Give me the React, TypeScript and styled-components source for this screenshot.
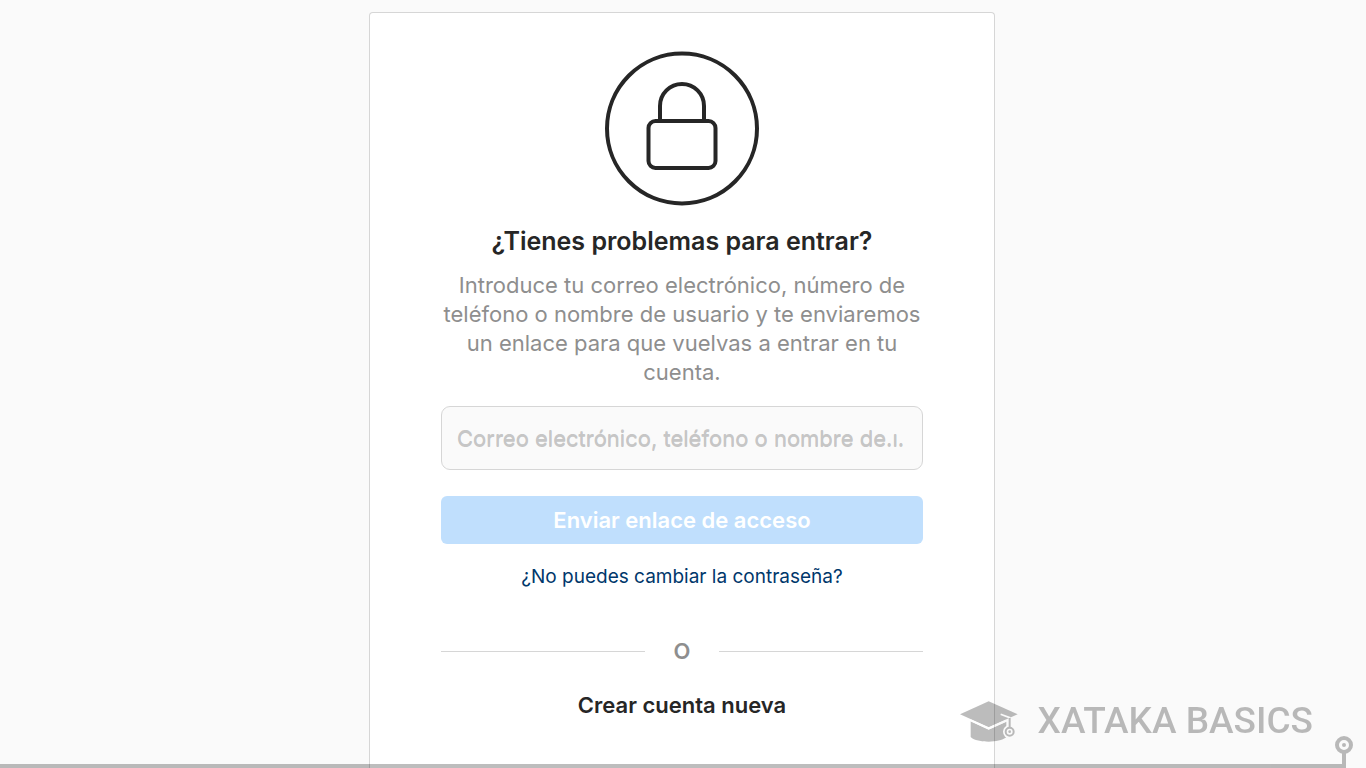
import React from "react";
import styled, { createGlobalStyle } from "styled-components";

const GlobalStyle = createGlobalStyle`
  *, *::before, *::after { box-sizing: border-box; }
  html, body { margin: 0; background: #fafafa; }
  body {
    font-family: Inter, "Liberation Sans", sans-serif;
    color: #262626;
  }
`;

const Page = styled.main`
  position: relative;
  display: flex;
  justify-content: center;
  min-height: 100vh;
  padding: 12px 18px 0 16px;
  overflow: hidden;
`;

const Card = styled.form`
  display: flex;
  flex-direction: column;
  align-items: center;
  width: 100%;
  max-width: 626px;
  padding: 38px 71px 48px;
  background: #fff;
  border: 1px solid #d6d6d6;
  border-bottom: 0;
  border-radius: 4px 4px 0 0;
`;

const LockIcon = styled.svg`
  width: 156px;
  height: 156px;
  fill: none;
  stroke: #262626;
  stroke-width: 4;
`;

const Title = styled.h1`
  margin: 19px 0 0;
  font-size: 25px;
  line-height: 30px;
  font-weight: 600;
  text-align: center;
`;

const Description = styled.p`
  margin: 15px 0 0;
  font-size: 22px;
  line-height: 29px;
  color: #8e8e8e;
  text-align: center;
`;

const Field = styled.input`
  width: 100%;
  height: 64px;
  margin-top: 19px;
  padding: 0 15px;
  font: inherit;
  font-size: 22px;
  color: #262626;
  background: #fafafa;
  border: 1px solid #d6d6d6;
  border-radius: 9px;
  &::placeholder {
    color: #c6c6c6;
    opacity: 1;
    text-shadow: 0 1px #c6c6c6;
  }
`;

const SubmitButton = styled.button`
  width: 100%;
  height: 48px;
  margin-top: 26px;
  padding: 0;
  font: inherit;
  font-size: 22px;
  font-weight: 600;
  color: #fff;
  background: #c0dffd;
  border: 0;
  border-radius: 6px;
`;

const TextLink = styled.a<{ $strong?: boolean }>`
  margin-top: ${(p) => (p.$strong ? "24px" : "21px")};
  font-size: ${(p) => (p.$strong ? "22px" : "19px")};
  line-height: ${(p) => (p.$strong ? "30px" : "24px")};
  font-weight: ${(p) => (p.$strong ? 600 : 400)};
  color: ${(p) => (p.$strong ? "#262626" : "#00376b")};
  text-decoration: none;
`;

const Divider = styled.div`
  display: flex;
  align-items: center;
  width: 100%;
  margin-top: 47px;
  font-size: 22px;
  line-height: 30px;
  font-weight: 600;
  color: #8e8e8e;
  &::before, &::after {
    content: "";
    flex: 1;
    height: 1px;
    background: #d6d6d6;
  }
`;

const DividerText = styled.span`
  width: 74px;
  text-align: center;
`;

const Watermark = styled.aside`
  position: absolute;
  left: 0;
  right: 0;
  bottom: 0;
  display: flex;
  flex-direction: column;
  align-items: flex-end;
  opacity: 0.26;
  color: #000;
  pointer-events: none;
`;

const Brand = styled.div`
  display: flex;
  align-items: center;
  gap: 20px;
  margin-right: 53px;
  font-family: Roboto, "Liberation Sans", sans-serif;
  font-size: 37px;
  font-weight: 500;
  line-height: 44px;
`;

const CapIcon = styled.svg`
  width: 58px;
  height: 41px;
`;

const Pin = styled.svg`
  width: 20px;
  height: 28px;
  margin: -7px 12px 0 0;
`;

const Track = styled.div`
  align-self: stretch;
  height: 4px;
  margin-right: 20px;
  background: currentColor;
`;

export default function App() {
  return (
    <>
      <GlobalStyle />
      <Page>
        <Card onSubmit={(e) => e.preventDefault()}>
          <LockIcon viewBox="0 0 156 156" aria-hidden="true">
            <circle cx="78" cy="77.5" r="75" />
            <rect x="44.5" y="70" width="67" height="47" rx="7" />
            <path d="M56 70V55a22 22 0 0 1 44 0V70" />
          </LockIcon>
          <Title>¿Tienes problemas para entrar?</Title>
          <Description>
            Introduce tu correo electrónico, número de teléfono o nombre de
            usuario y te enviaremos un enlace para que vuelvas a entrar en tu
            cuenta.
          </Description>
          <Field
            type="text"
            aria-label="Correo electrónico, teléfono o nombre de usuario"
            placeholder="Correo electrónico, teléfono o nombre de.ı."
          />
          <SubmitButton type="submit">Enviar enlace de acceso</SubmitButton>
          <TextLink href="#ayuda">¿No puedes cambiar la contraseña?</TextLink>
          <Divider>
            <DividerText>O</DividerText>
          </Divider>
          <TextLink href="#registro" $strong>
            Crear cuenta nueva
          </TextLink>
        </Card>
        <Watermark>
          <Brand>
            <CapIcon viewBox="61 61 174 123" aria-hidden="true">
              <mask id="cap-cutouts">
                <rect x="50" y="50" width="200" height="150" fill="#fff" />
                <path
                  d="M183 101L210 111V138"
                  fill="none"
                  stroke="#000"
                  strokeWidth="5"
                />
                <path d="M210 117V138" stroke="#000" strokeWidth="15" />
                <path
                  d="M93 119L147 143L200 120"
                  fill="none"
                  stroke="#000"
                  strokeWidth="6"
                />
                <circle cx="210" cy="153" r="20" fill="#000" />
              </mask>
              <g fill="currentColor" mask="url(#cap-cutouts)">
                <path d="M61 101L147 62L234 101L147 140Z" />
                <path d="M93 122L147 147L200 123V170C188 179 168 183 147 183S103 179 93 169Z" />
              </g>
              <path d="M210 112V139" stroke="currentColor" strokeWidth="6" />
              <circle
                cx="210"
                cy="153"
                r="12"
                fill="none"
                stroke="currentColor"
                strokeWidth="6"
              />
              <circle cx="210" cy="153" r="4" fill="currentColor" />
            </CapIcon>
            <span>XATAKA BASICS</span>
          </Brand>
          <Pin viewBox="0 0 20 28" aria-hidden="true">
            <circle
              cx="10"
              cy="9"
              r="7"
              fill="none"
              stroke="currentColor"
              strokeWidth="4"
            />
            <circle cx="10" cy="9" r="2" fill="currentColor" />
            <path d="M8 17H12V28H8Z" fill="currentColor" />
          </Pin>
          <Track />
        </Watermark>
      </Page>
    </>
  );
}
